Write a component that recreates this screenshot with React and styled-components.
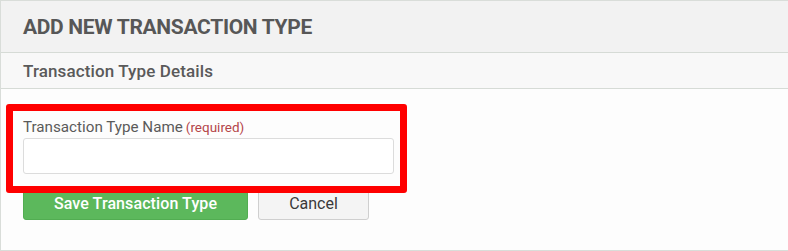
import styled, { createGlobalStyle } from 'styled-components'

const GlobalStyle = createGlobalStyle`
    body {
        margin: 0;
        font-family: Roboto, "Liberation Sans", Arial, sans-serif;
        background: #fff;
    }
`

const Panel = styled.div`
    position: relative;
    border: 1px solid #d9ddd9;
    border-right: none;
    background: #fdfdfd;
`

const PanelHeader = styled.div`
    height: 51px;
    display: flex;
    align-items: center;
    padding: 0 22px;
    background: #f2f2f2;
    border-bottom: 1px solid #d6dbd6;

    h2 {
        margin: 0;
        font-size: 21px;
        font-weight: 700;
        color: #575757;
        letter-spacing: -0.32px;
    }
`

const SectionTitle = styled.div`
    height: 35px;
    display: flex;
    align-items: center;
    padding: 0 22px;
    background: #f8f8f8;
    border-bottom: 1px solid #d6dbd6;
    font-size: 17px;
    font-weight: 500;
    letter-spacing: 0.12px;
    color: #5a5a5a;
`

const FormBody = styled.form`
    padding: 28px 22px 30px;
`

const Label = styled.label`
    display: block;
    height: 20px;
    margin-bottom: 1px;
    font-size: 15.2px;
    line-height: 20px;
    color: #5a5a5a;

    span {
        font-size: 13.5px;
        color: #b5454a;
        margin-left: 3px;
    }
`

const TextInput = styled.input`
    display: block;
    box-sizing: border-box;
    width: 371px;
    height: 36px;
    border: 1px solid #dcdcdc;
    border-radius: 3px;
    background: #fff;
    margin-bottom: 12px;
`

const Actions = styled.div`
    display: flex;
    gap: 10px;
`

const Button = styled.button`
    box-sizing: border-box;
    height: 34px;
    border-radius: 3px;
    font-family: inherit;
    font-size: 16px;
    cursor: pointer;
    padding: 0;
    width: ${props => props.wide ? '225px' : '111px'};
    background: ${props => props.primary ? '#5cb85c' : '#f4f4f4'};
    border: 1px solid ${props => props.primary ? '#52ad52' : '#cfcfcf'};
    color: ${props => props.primary ? '#fff' : '#3a3a3a'};
    font-weight: ${props => props.primary ? 500 : 400};
    letter-spacing: ${props => props.primary ? '0.1px' : '0'};
`

const Highlight = styled.div`
    position: absolute;
    left: 5px;
    top: 103px;
    width: 401px;
    height: 89px;
    box-sizing: border-box;
    border: 7px solid #ff0000;
    border-radius: 3px;
    pointer-events: none;
`

function App() {
    return (
        <>
            <GlobalStyle />
            <Panel>
                <PanelHeader>
                    <h2>ADD NEW TRANSACTION TYPE</h2>
                </PanelHeader>
                <SectionTitle>Transaction Type Details</SectionTitle>
                <FormBody onSubmit={e => e.preventDefault()}>
                    <Label>Transaction Type Name<span>(required)</span></Label>
                    <TextInput type="text" name="name" />
                    <Actions>
                        <Button type="submit" primary wide>Save Transaction Type</Button>
                        <Button type="button">Cancel</Button>
                    </Actions>
                </FormBody>
                <Highlight />
            </Panel>
        </>
    )
}

export default App
